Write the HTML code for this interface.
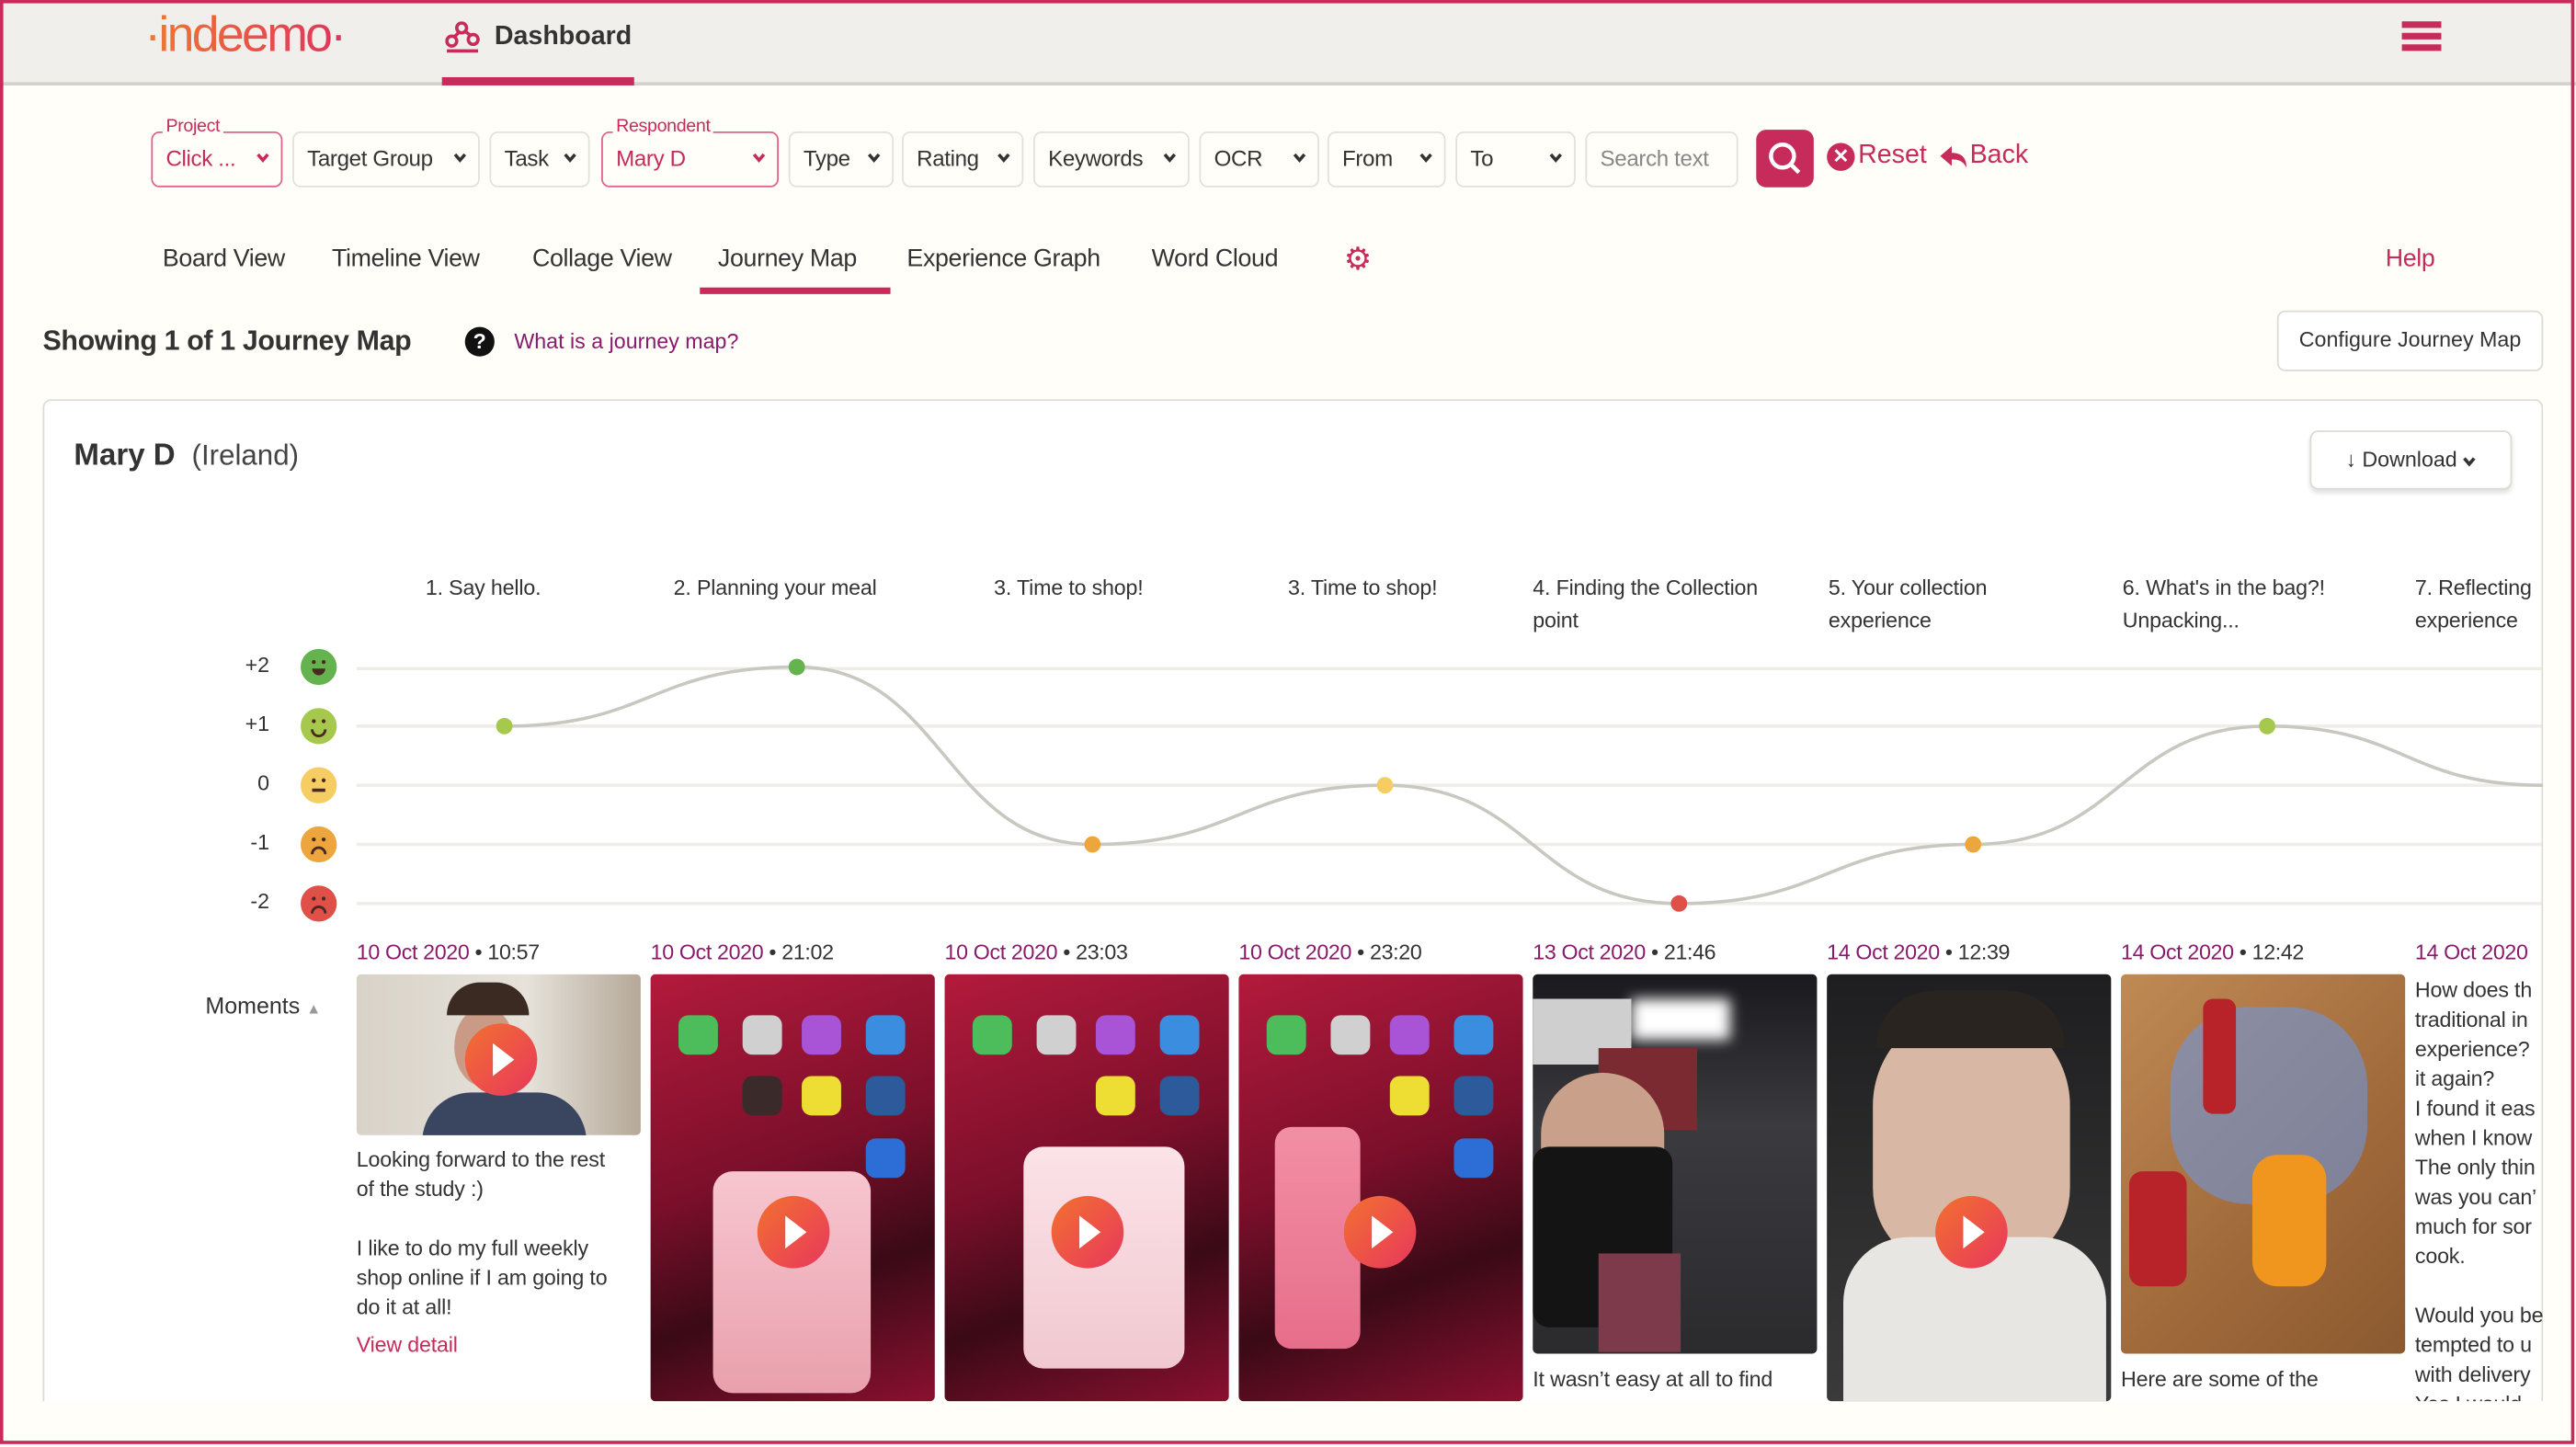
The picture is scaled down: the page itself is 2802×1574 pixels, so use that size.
<!DOCTYPE html>
<html><head><meta charset="utf-8"><style>
*{box-sizing:border-box;margin:0;padding:0}
html,body{width:2802px;height:1574px;overflow:hidden;background:#fffef8}
#w{position:absolute;left:0;top:0;width:1568px;height:881px;transform:scale(1.787);transform-origin:0 0;font-family:"Liberation Sans",sans-serif;color:#333;background:#fffef8}
.a{position:absolute}
.hdr{left:0;top:0;width:1568px;height:52px;background:#f0efeb;border-bottom:2px solid #d3d2ce}
.frame{left:0;top:0;width:1567px;height:879px;border:2px solid #c62b5b;pointer-events:none}
.f{position:absolute;top:80px;height:34px;border:1.5px solid #e2e1da;border-radius:5px;background:#fffef8;font-size:13.5px;line-height:31px;padding-left:8px;color:#333;letter-spacing:-0.2px}
.f.p{border-color:#e0628e;color:#c62b5b}
.f .c{position:absolute;right:7px;top:12px;width:8px;height:6px}
.f .l{position:absolute;left:6px;top:-10px;font-size:11px;line-height:12px;background:#fffef8;color:#c62b5b;padding:0 2px}
.tab{position:absolute;top:149px;font-size:15px;color:#333;letter-spacing:-0.2px}
.yl{position:absolute;left:130px;width:34px;text-align:right;font-size:13px}
.gl{position:absolute;left:217px;width:1330px;height:1.5px;background:#eeede7}
.st{position:absolute;top:348px;font-size:13px;line-height:20px;color:#333;letter-spacing:-0.1px}
.dt{position:absolute;top:572px;font-size:13px;color:#333;letter-spacing:-0.2px}
.dt b{font-weight:normal;color:#8a1a6b}
.im{position:absolute;top:593px;width:173px;overflow:hidden;border-radius:3px}
.play{position:absolute;width:44px;height:44px;border-radius:50%;background:linear-gradient(135deg,#f2712f,#e8375d)}
.play:after{content:"";position:absolute;left:17px;top:12px;border-left:13px solid #fff;border-top:10px solid transparent;border-bottom:10px solid transparent}
.tx{position:absolute;font-size:13px;line-height:18px;color:#333;letter-spacing:-0.1px}
.ios{background:linear-gradient(160deg,#b31a3c 0%,#7a0f2a 45%,#3a0a16 70%,#8a1030 100%)}
.app{position:absolute;width:24px;height:24px;border-radius:6px}
</style></head><body><div id="w">
<svg width="0" height="0" style="position:absolute"><defs><symbol id="ch" viewBox="0 0 8 6"><path d="M1 1 4 4.5 7 1" fill="none" stroke="currentColor" stroke-width="2"/></symbol></defs></svg>
<div class="a hdr"></div>
<div class="a" style="left:88px;top:5px;font-size:30px;letter-spacing:-1.5px;background:linear-gradient(90deg,#f07a2f,#e0335d);-webkit-background-clip:text;color:transparent">·indeemo·</div>
<svg class="a" style="left:271px;top:13px" width="22" height="20" viewBox="0 0 22 20"><circle cx="10" cy="4" r="3" fill="none" stroke="#c62b5b" stroke-width="2"/><circle cx="4" cy="12" r="3" fill="none" stroke="#c62b5b" stroke-width="2"/><circle cx="17" cy="11" r="3" fill="none" stroke="#c62b5b" stroke-width="2"/><path d="M5 10 9 6M12 6l4 3" stroke="#c62b5b" stroke-width="2"/><rect x="1" y="17" width="19" height="2" fill="#c62b5b"/></svg>
<div class="a" style="left:301px;top:14px;font-size:16px;font-weight:bold;color:#333">Dashboard</div>
<div class="a" style="left:269px;top:47px;width:117px;height:5px;background:#c62b5b"></div>
<div class="a" style="left:1462px;top:13px;width:24px;height:4px;background:#c62b5b;box-shadow:0 7px 0 #c62b5b,0 14px 0 #c62b5b"></div>

<div class="f p" style="left:92px;width:80px"><span class="l">Project</span>Click ...<svg class="c"><use href="#ch"/></svg></div>
<div class="f" style="left:178px;width:114px">Target Group<svg class="c"><use href="#ch"/></svg></div>
<div class="f" style="left:298px;width:61px">Task<svg class="c"><use href="#ch"/></svg></div>
<div class="f p" style="left:366px;width:108px"><span class="l">Respondent</span>Mary D<svg class="c"><use href="#ch"/></svg></div>
<div class="f" style="left:480px;width:64px">Type<svg class="c"><use href="#ch"/></svg></div>
<div class="f" style="left:549px;width:74px">Rating<svg class="c"><use href="#ch"/></svg></div>
<div class="f" style="left:629px;width:95px">Keywords<svg class="c"><use href="#ch"/></svg></div>
<div class="f" style="left:730px;width:73px">OCR<svg class="c"><use href="#ch"/></svg></div>
<div class="f" style="left:808px;width:72px">From<svg class="c"><use href="#ch"/></svg></div>
<div class="f" style="left:886px;width:73px">To<svg class="c"><use href="#ch"/></svg></div>
<div class="f" style="left:965px;width:93px;color:#888">Search text</div>
<div class="a" style="left:1069px;top:79px;width:35px;height:35px;border-radius:6px;background:#c62b5b"><svg width="35" height="35"><circle cx="16" cy="16" r="7" fill="none" stroke="#fff" stroke-width="2.5"/><path d="M21 21 26 26" stroke="#fff" stroke-width="2.5"/></svg></div>
<div class="a" style="left:1112px;top:87px;width:17px;height:17px;border-radius:50%;background:#c62b5b;color:#fff;font-size:12px;line-height:17px;text-align:center;font-weight:bold">✕</div>
<div class="a" style="left:1131px;top:86px;font-size:16px;color:#c62b5b">Reset</div>
<svg class="a" style="left:1180px;top:88px" width="18" height="16" viewBox="0 0 18 16"><path d="M8 1 1 7l7 6V9c4 0 7 1 9 5 0-6-3-9-9-9z" fill="#c62b5b"/></svg>
<div class="a" style="left:1199px;top:86px;font-size:16px;color:#c62b5b">Back</div>

<div class="tab" style="left:99px">Board View</div>
<div class="tab" style="left:202px">Timeline View</div>
<div class="tab" style="left:324px">Collage View</div>
<div class="tab" style="left:437px">Journey Map</div>
<div class="a" style="left:426px;top:175px;width:116px;height:4px;background:#c62b5b"></div>
<div class="tab" style="left:552px">Experience Graph</div>
<div class="tab" style="left:701px">Word Cloud</div>
<div class="a" style="left:818px;top:147px;font-size:19px;color:#c62b5b">⚙</div>
<div class="tab" style="left:1452px;color:#c62b5b">Help</div>

<div class="a" style="left:26px;top:198px;font-size:17px;font-weight:bold;color:#333;letter-spacing:-0.2px">Showing 1 of 1 Journey Map</div>
<div class="a" style="left:283px;top:199px;width:18px;height:18px;border-radius:50%;background:#111;color:#fff;font-size:13px;line-height:18px;text-align:center;font-weight:bold">?</div>
<div class="a" style="left:313px;top:200px;font-size:13px;color:#8a1a6b">What is a journey map?</div>
<div class="a" style="left:1386px;top:189px;width:162px;height:37px;border:1.5px solid #dcdbd4;border-radius:5px;background:#fff;font-size:13px;line-height:34px;text-align:center;color:#333">Configure Journey Map</div>

<div class="a" style="left:26px;top:243px;width:1522px;height:620px;background:#fff;border:1.5px solid #dcdbd4;border-bottom:none;border-radius:5px 5px 0 0"></div>
<div class="a" style="left:45px;top:266px;font-size:18.5px;color:#333"><b>Mary D</b> <span style="font-size:17.5px;color:#444">&nbsp;(Ireland)</span></div>
<div class="a" style="left:1406px;top:262px;width:123px;height:36px;border:1.5px solid #dcdbd4;border-radius:5px;background:#fff;font-size:13px;line-height:34px;text-align:center;box-shadow:0 2px 3px rgba(0,0,0,.12)">&#8595; Download <svg style="width:8px;height:6px"><use href="#ch"/></svg></div>

<div class="st" style="left:259px">1. Say hello.</div>
<div class="st" style="left:410px">2. Planning your meal</div>
<div class="st" style="left:605px">3. Time to shop!</div>
<div class="st" style="left:784px">3. Time to shop!</div>
<div class="st" style="left:933px">4. Finding the Collection<br>point</div>
<div class="st" style="left:1113px">5. Your collection<br>experience</div>
<div class="st" style="left:1292px">6. What's in the bag?!<br>Unpacking...</div>
<div class="st" style="left:1470px;width:78px;overflow:hidden;white-space:nowrap">7. Reflecting<br>experience</div>

<div class="yl" style="top:397px">+2</div><div class="yl" style="top:433px">+1</div><div class="yl" style="top:469px">0</div><div class="yl" style="top:505px">-1</div><div class="yl" style="top:541px">-2</div>
<div class="gl" style="top:406px"></div><div class="gl" style="top:441px"></div><div class="gl" style="top:477px"></div><div class="gl" style="top:513px"></div><div class="gl" style="top:549px"></div>
<svg class="a" style="left:0;top:0" width="1548" height="600">
<g transform="translate(194,406)"><circle r="11" fill="#64b34f"/><circle cx="-3" cy="-3" r="1.2" fill="#4a2a1e"/><circle cx="3" cy="-3" r="1.2" fill="#4a2a1e"/><path d="M-4 1h8a4 4 0 0 1-8 0z" fill="#4a2a1e"/></g>
<g transform="translate(194,442)"><circle r="11" fill="#a6c94d"/><circle cx="-3" cy="-3" r="1.2" fill="#4a2a1e"/><circle cx="3" cy="-3" r="1.2" fill="#4a2a1e"/><path d="M-4 2a4 4 0 0 0 8 0" fill="none" stroke="#4a2a1e" stroke-width="1.6"/></g>
<g transform="translate(194,478)"><circle r="11" fill="#f5cd63"/><circle cx="-3" cy="-3" r="1.2" fill="#4a2a1e"/><circle cx="3" cy="-3" r="1.2" fill="#4a2a1e"/><rect x="-4" y="2" width="8" height="2" fill="#4a2a1e"/></g>
<g transform="translate(194,514)"><circle r="11" fill="#eda63d"/><circle cx="-3" cy="-3" r="1.2" fill="#4a2a1e"/><circle cx="3" cy="-3" r="1.2" fill="#4a2a1e"/><path d="M-4 6a4 4 0 0 1 8 0" fill="none" stroke="#4a2a1e" stroke-width="1.6"/></g>
<g transform="translate(194,550)"><circle r="11" fill="#df5049"/><circle cx="-3" cy="-3" r="1.2" fill="#4a2a1e"/><circle cx="3" cy="-3" r="1.2" fill="#4a2a1e"/><path d="M-4 6a4 4 0 0 1 8 0" fill="none" stroke="#4a2a1e" stroke-width="1.6"/></g>
<path d="M307 442 C396 442 396 406 485 406 C575 406 575 514 665 514 C754 514 754 478 843 478 C933 478 933 550 1022 550 C1112 550 1112 514 1201 514 C1291 514 1291 442 1380 442 C1464 442 1464 478 1548 478" fill="none" stroke="#c8c7c0" stroke-width="2"/>
<circle cx="307" cy="442" r="5" fill="#a6c94d"/><circle cx="485" cy="406" r="5" fill="#64b34f"/><circle cx="665" cy="514" r="5" fill="#eda63d"/><circle cx="843" cy="478" r="5" fill="#f5cd63"/><circle cx="1022" cy="550" r="5" fill="#df5049"/><circle cx="1201" cy="514" r="5" fill="#eda63d"/><circle cx="1380" cy="442" r="5" fill="#a6c94d"/>
</svg>

<div class="dt" style="left:217px"><b>10 Oct 2020</b> • 10:57</div>
<div class="dt" style="left:396px"><b>10 Oct 2020</b> • 21:02</div>
<div class="dt" style="left:575px"><b>10 Oct 2020</b> • 23:03</div>
<div class="dt" style="left:754px"><b>10 Oct 2020</b> • 23:20</div>
<div class="dt" style="left:933px"><b>13 Oct 2020</b> • 21:46</div>
<div class="dt" style="left:1112px"><b>14 Oct 2020</b> • 12:39</div>
<div class="dt" style="left:1291px"><b>14 Oct 2020</b> • 12:42</div>
<div class="dt" style="left:1470px;width:78px;overflow:hidden;white-space:nowrap"><b>14 Oct 2020</b></div>
<div class="a" style="left:125px;top:604px;font-size:14px;color:#333">Moments <span style="font-size:9px;color:#999">▲</span></div>

<div class="im" style="left:217px;height:98px;background:radial-gradient(ellipse 30px 40px at 45% 45%,#c99a85 60%,transparent 62%),linear-gradient(90deg,#d8d2c8,#e6e2da 60%,#b5a898);"><div class="a" style="left:40px;top:72px;width:100px;height:30px;background:#3a4660;border-radius:40px 40px 0 0"></div><div class="a" style="left:55px;top:5px;width:50px;height:20px;background:#3a2a22;border-radius:20px 20px 0 0"></div><div class="play" style="left:66px;top:30px"></div></div>
<div class="tx" style="left:217px;top:697px;width:173px;white-space:nowrap">Looking forward to the rest<br>of the study :)<br><br>I like to do my full weekly<br>shop online if I am going to<br>do it at all!</div>
<div class="tx" style="left:217px;top:810px;color:#c62b5b">View detail</div>

<div class="im ios" style="left:396px;height:260px"><div class="app" style="left:17px;top:25px;background:#4cbd5a"></div><div class="app" style="left:56px;top:25px;background:#d0d0d0"></div><div class="app" style="left:92px;top:25px;background:#a953d6"></div><div class="app" style="left:131px;top:25px;background:#3b8de0"></div><div class="app" style="left:56px;top:62px;background:#3a2a2a"></div><div class="app" style="left:92px;top:62px;background:#eedd33"></div><div class="app" style="left:131px;top:62px;background:#2c5a9a"></div><div class="app" style="left:131px;top:100px;background:#2d6ed6"></div><div class="a" style="left:38px;top:120px;width:96px;height:135px;border-radius:12px;background:linear-gradient(180deg,#f7c6cf,#e9a0ad)"></div><div class="play" style="left:65px;top:135px"></div></div>
<div class="im ios" style="left:575px;height:260px"><div class="app" style="left:17px;top:25px;background:#4cbd5a"></div><div class="app" style="left:56px;top:25px;background:#d0d0d0"></div><div class="app" style="left:92px;top:25px;background:#a953d6"></div><div class="app" style="left:131px;top:25px;background:#3b8de0"></div><div class="app" style="left:92px;top:62px;background:#eedd33"></div><div class="app" style="left:131px;top:62px;background:#2c5a9a"></div><div class="a" style="left:48px;top:105px;width:98px;height:135px;border-radius:12px;background:linear-gradient(180deg,#fbe3e8,#f1c8d0)"></div><div class="play" style="left:65px;top:135px"></div></div>
<div class="im ios" style="left:754px;height:260px"><div class="app" style="left:17px;top:25px;background:#4cbd5a"></div><div class="app" style="left:56px;top:25px;background:#d0d0d0"></div><div class="app" style="left:92px;top:25px;background:#a953d6"></div><div class="app" style="left:131px;top:25px;background:#3b8de0"></div><div class="app" style="left:92px;top:62px;background:#eedd33"></div><div class="app" style="left:131px;top:62px;background:#2c5a9a"></div><div class="app" style="left:131px;top:100px;background:#2d6ed6"></div><div class="a" style="left:22px;top:93px;width:52px;height:135px;border-radius:10px;background:linear-gradient(180deg,#f28fa5,#e76e8a)"></div><div class="play" style="left:64px;top:135px"></div></div>
<div class="im" style="left:933px;height:231px;background:linear-gradient(180deg,#1a1a1e,#3a3a3f 40%,#2b2b2e)"><div class="a" style="left:60px;top:15px;width:60px;height:25px;background:#fff;filter:blur(4px)"></div><div class="a" style="left:0;top:15px;width:60px;height:40px;background:#cfcfcf"></div><div class="a" style="left:40px;top:45px;width:60px;height:50px;background:#7a2a30"></div><div class="a" style="left:5px;top:60px;width:75px;height:150px;border-radius:40px 40px 10px 10px;background:#c9a08a"></div><div class="a" style="left:0;top:105px;width:85px;height:110px;background:#141414;border-radius:10px"></div><div class="a" style="left:40px;top:170px;width:50px;height:60px;background:#7d3a4a"></div></div>
<div class="tx" style="left:933px;top:831px;width:173px;height:22px;overflow:hidden">It wasn’t easy at all to find</div>
<div class="im" style="left:1112px;height:260px;background:linear-gradient(180deg,#1e1e20,#3a3a3a)"><div class="a" style="left:28px;top:20px;width:120px;height:160px;border-radius:60px 60px 50px 50px;background:#d9b7a5"></div><div class="a" style="left:30px;top:10px;width:115px;height:35px;border-radius:60px 60px 0 0;background:#2a2420"></div><div class="a" style="left:10px;top:160px;width:160px;height:110px;border-radius:40px 40px 0 0;background:#e8e6e2"></div><div class="play" style="left:66px;top:135px"></div></div>
<div class="im" style="left:1291px;height:231px;background:linear-gradient(135deg,#c08a55,#a0693a 60%,#8a5a30)"><div class="a" style="left:30px;top:20px;width:120px;height:120px;border-radius:40%;background:rgba(110,150,220,.6)"></div><div class="a" style="left:50px;top:15px;width:20px;height:70px;background:#b8232a;border-radius:6px"></div><div class="a" style="left:80px;top:110px;width:45px;height:80px;background:#f0961e;border-radius:15px"></div><div class="a" style="left:5px;top:120px;width:35px;height:70px;background:#b8232a;border-radius:8px"></div></div>
<div class="tx" style="left:1291px;top:831px;width:173px;height:22px;overflow:hidden">Here are some of the</div>
<div class="tx" style="left:1470px;top:594px;width:78px;height:259px;overflow:hidden;white-space:nowrap">How does th<br>traditional in<br>experience?<br>it again?<br>I found it eas<br>when I know<br>The only thin<br>was you can’<br>much for sor<br>cook.<br><br>Would you be<br>tempted to u<br>with delivery<br>Yes I would</div>
<div class="a" style="left:0;top:853px;width:1568px;height:28px;background:#fffef8"></div>
<div class="a frame"></div>
</div></body></html>
